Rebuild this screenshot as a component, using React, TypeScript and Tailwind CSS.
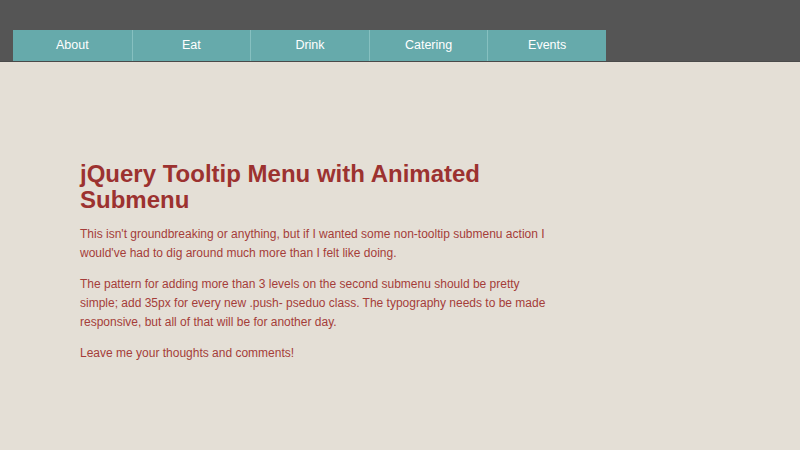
const navItems = ["About", "Eat", "Drink", "Catering", "Events"];

export default function App() {
  return (
    <main className="min-h-[450px] bg-[#e4dfd6] font-['Liberation_Sans',Arial,sans-serif]">
      {/* Top bar with the tab menu sitting on its bottom edge */}
      <header className="h-[62px] bg-[#555555] pt-[30px] pl-[13px] border-b border-[#4a4a4a]">
        <nav className="grid w-[593px] grid-cols-5 bg-[#66aaab] h-[31px]">
          {navItems.map((item, i) => (
            <a
              key={item}
              className={`flex items-center justify-center text-[12.5px] text-white ${i > 0 ? "border-l border-[#86c0c0]" : ""}`}
            >
              {item}
            </a>
          ))}
        </nav>
      </header>

      <section className="pl-[80px] pt-[99px] w-[556px] text-[#a53d39]">
        <h1 className="text-[24px] font-bold leading-[26px] mb-[12px] text-[#9c3230]">
          jQuery Tooltip Menu with Animated Submenu
        </h1>
        <p className="text-[12px] leading-[19px] mb-[12px]">
          This isn't groundbreaking or anything, but if I wanted some non-tooltip submenu action I
          would've had to dig around much more than I felt like doing.
        </p>
        <p className="text-[12px] leading-[19px] mb-[12px]">
          The pattern for adding more than 3 levels on the second submenu should be pretty simple;
          add 35px for every new .push- pseduo class. The typography needs to be made responsive,
          but all of that will be for another day.
        </p>
        <p className="text-[12px] leading-[19px]">Leave me your thoughts and comments!</p>
      </section>
    </main>
  );
}
